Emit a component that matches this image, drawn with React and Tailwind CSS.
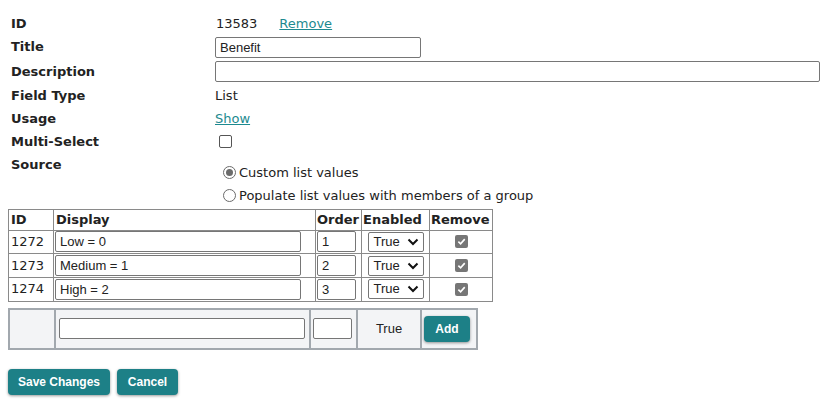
import React from "react";

const teal = "bg-[#1d8087]";

function CheckedBox() {
  return (
    <span className="inline-flex h-[13px] w-[13px] items-center justify-center rounded-[2px] bg-[#767676]">
      <svg width="9" height="9" viewBox="0 0 10 10">
        <path d="M1.5 5.2 L4 7.6 L8.6 2.4" fill="none" stroke="#fff" strokeWidth="1.8" />
      </svg>
    </span>
  );
}

function Radio({ checked }) {
  return (
    <span className="inline-flex h-[13px] w-[13px] items-center justify-center rounded-full border border-[#6b6b6b] bg-white">
      {checked && <span className="h-[7px] w-[7px] rounded-full bg-[#6b6b6b]" />}
    </span>
  );
}

function FakeSelect() {
  return (
    <div className="mx-auto flex h-[20px] w-[56px] items-center justify-between rounded-[2px] border border-[#767676] bg-white pl-[5px] pr-[4px] font-['Liberation_Sans',sans-serif] text-[13px] text-[#222]">
      True
      <svg width="12" height="8" viewBox="0 0 12 8">
        <path d="M1.5 1.5 L6 6 L10.5 1.5" fill="none" stroke="#111" strokeWidth="2" />
      </svg>
    </div>
  );
}

const inputCls =
  "h-[21px] rounded-[2px] border border-[#767676] bg-white px-[4px] font-['Liberation_Sans',sans-serif] text-[13px] text-[#222] outline-none";

function FormRow({ label, children, h = "h-[23px]" }) {
  return (
    <div className={`flex items-center ${h}`}>
      <div className="w-[207px] shrink-0 pl-[3px] font-bold">{label}</div>
      <div className="flex min-w-0 flex-1 items-center">{children}</div>
    </div>
  );
}

const items = [
  { id: 1272, display: "Low = 0", order: "1" },
  { id: 1273, display: "Medium = 1", order: "2" },
  { id: 1274, display: "High = 2", order: "3" },
];

const cell = "border border-[#8a8a8a]";

export default function App() {
  return (
    <div className="min-h-[409px] bg-white pl-2 pr-[5px] pt-[13px] font-['DejaVu_Sans',Verdana,sans-serif] text-[13px] text-[#222]">
      <FormRow label="ID" h="h-[22px]">
        <span className="ml-[1px]">13583</span>
        <a href="#" className="ml-[22px] text-[#1d8a90] underline">
          Remove
        </a>
      </FormRow>
      <FormRow label="Title" h="h-[24px]">
        <input className={`${inputCls} w-[206px]`} defaultValue="Benefit" />
      </FormRow>
      <FormRow label="Description" h="h-[25px]">
        <input className={`${inputCls} w-[605px]`} defaultValue="" />
      </FormRow>
      <FormRow label="Field Type" h="h-[23px]">
        <span>List</span>
      </FormRow>
      <FormRow label="Usage" h="h-[23px]">
        <a href="#" className="text-[#1d8a90] underline">
          Show
        </a>
      </FormRow>
      <FormRow label="Multi-Select" h="h-[23px]">
        <span className="ml-[4px] inline-block h-[13px] w-[13px] rounded-[2px] border border-[#555] bg-white" />
      </FormRow>
      <div className="flex">
        <div className="w-[207px] shrink-0 pl-[3px] pt-[2px] font-bold">Source</div>
        <div className="flex flex-col gap-[3px] pl-[8px] pt-[10px]">
          <label className="flex items-center gap-[3px]">
            <Radio checked />
            Custom list values
          </label>
          <label className="flex items-center gap-[3px]">
            <Radio />
            Populate list values with members of a group
          </label>
        </div>
      </div>

      <table className="mt-[4px] border-collapse border border-[#8a8a8a]">
        <thead>
          <tr className="h-[20px] text-left font-bold">
            <th className={`w-[45px] ${cell} px-[2px] py-0`}>ID</th>
            <th className={`w-[262px] ${cell} px-[2px] py-0`}>Display</th>
            <th className={`w-[46px] ${cell} px-[1px] py-0`}>Order</th>
            <th className={`w-[68px] ${cell} px-[1px] py-0`}>Enabled</th>
            <th className={`w-[63px] ${cell} px-[1px] py-0`}>Remove</th>
          </tr>
        </thead>
        <tbody>
          {items.map((it) => (
            <tr key={it.id} className="h-[23.7px]">
              <td className={`${cell} px-[2px]`}>{it.id}</td>
              <td className={`${cell} px-[1px]`}>
                <input className={`${inputCls} block w-[246px]`} defaultValue={it.display} />
              </td>
              <td className={`${cell} px-[1px]`}>
                <input className={`${inputCls} block w-[39px]`} defaultValue={it.order} />
              </td>
              <td className={cell}>
                <FakeSelect />
              </td>
              <td className={`${cell} text-center`}>
                <div className="flex justify-center">
                  <CheckedBox />
                </div>
              </td>
            </tr>
          ))}
        </tbody>
      </table>

      <table className="mt-[6px] border-collapse border-2 border-[#a2a8ae] bg-[#f3f4f6]">
        <tbody>
          <tr className="h-[40px]">
            <td className="w-[46px] border-2 border-[#a2a8ae]" />
            <td className="w-[255px] border-2 border-[#a2a8ae] px-[3px]">
              <input className={`${inputCls} block w-[246px]`} defaultValue="" />
            </td>
            <td className="w-[47px] border-2 border-[#a2a8ae] px-[2px]">
              <input className={`${inputCls} block w-[39px]`} defaultValue="" />
            </td>
            <td className="w-[64px] border-2 border-[#a2a8ae] text-center font-['Liberation_Sans',sans-serif] text-[13px]">
              True
            </td>
            <td className="w-[56px] border-2 border-[#a2a8ae] px-[2px]">
              <button
                className={`${teal} flex h-[26px] w-[46px] items-center justify-center rounded-[4px] font-['Liberation_Sans',sans-serif] text-[12px] font-bold text-white shadow-[0_1px_3px_rgba(0,0,0,0.4)]`}
              >
                Add
              </button>
            </td>
          </tr>
        </tbody>
      </table>

      <div className="mt-[19px] flex gap-[7px]">
        <button
          className={`${teal} h-[26px] w-[102px] rounded-[4px] font-['Liberation_Sans',sans-serif] text-[12px] font-bold text-white shadow-[0_1px_3px_rgba(0,0,0,0.4)]`}
        >
          Save Changes
        </button>
        <button
          className={`${teal} h-[26px] w-[61px] rounded-[4px] font-['Liberation_Sans',sans-serif] text-[12px] font-bold text-white shadow-[0_1px_3px_rgba(0,0,0,0.4)]`}
        >
          Cancel
        </button>
      </div>
    </div>
  );
}
